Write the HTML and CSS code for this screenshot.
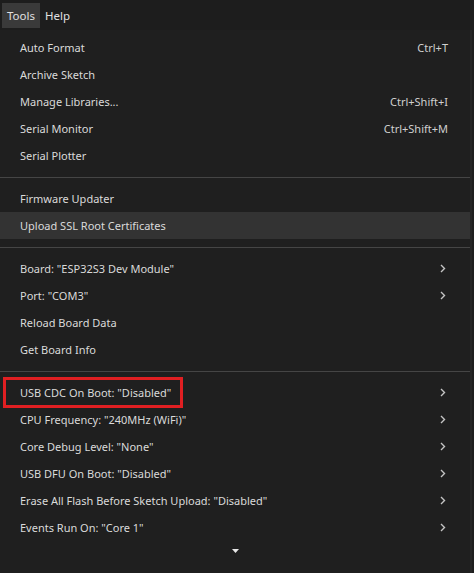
FILE: index.html
```html
<!DOCTYPE html>
<html>
<head>
<meta charset="utf-8">
<link rel="stylesheet" href="styles.css">
</head>
<body>
<div class="bar">
  <span class="bar-item active">Tools</span>
  <span class="bar-item">Help</span>
</div>
<div class="menu">
  <div class="section">
    <div class="row"><span>Auto Format</span><span class="key">Ctrl+T</span></div>
    <div class="row"><span>Archive Sketch</span></div>
    <div class="row"><span>Manage Libraries...</span><span class="key">Ctrl+Shift+I</span></div>
    <div class="row"><span>Serial Monitor</span><span class="key">Ctrl+Shift+M</span></div>
    <div class="row"><span>Serial Plotter</span></div>
  </div>
  <div class="sep"></div>
  <div class="section">
    <div class="row"><span>Firmware Updater</span></div>
    <div class="row hover"><span>Upload SSL Root Certificates</span></div>
  </div>
  <div class="sep"></div>
  <div class="section">
    <div class="row"><span>Board: "ESP32S3 Dev Module"</span><svg class="chev" width="6" height="9" viewBox="0 0 6 9"><polyline points="1,1 4.5,4.5 1,8" /></svg></div>
    <div class="row"><span>Port: "COM3"</span><svg class="chev" width="6" height="9" viewBox="0 0 6 9"><polyline points="1,1 4.5,4.5 1,8" /></svg></div>
    <div class="row"><span>Reload Board Data</span></div>
    <div class="row"><span>Get Board Info</span></div>
  </div>
  <div class="sep"></div>
  <div class="section">
    <div class="row marked"><span>USB CDC On Boot: "Disabled"</span><svg class="chev" width="6" height="9" viewBox="0 0 6 9"><polyline points="1,1 4.5,4.5 1,8" /></svg><div class="redbox"></div></div>
    <div class="row"><span>CPU Frequency: "240MHz (WiFi)"</span><svg class="chev" width="6" height="9" viewBox="0 0 6 9"><polyline points="1,1 4.5,4.5 1,8" /></svg></div>
    <div class="row"><span>Core Debug Level: "None"</span><svg class="chev" width="6" height="9" viewBox="0 0 6 9"><polyline points="1,1 4.5,4.5 1,8" /></svg></div>
    <div class="row"><span>USB DFU On Boot: "Disabled"</span><svg class="chev" width="6" height="9" viewBox="0 0 6 9"><polyline points="1,1 4.5,4.5 1,8" /></svg></div>
    <div class="row"><span>Erase All Flash Before Sketch Upload: "Disabled"</span><svg class="chev" width="6" height="9" viewBox="0 0 6 9"><polyline points="1,1 4.5,4.5 1,8" /></svg></div>
    <div class="row"><span>Events Run On: "Core 1"</span><svg class="chev" width="6" height="9" viewBox="0 0 6 9"><polyline points="1,1 4.5,4.5 1,8" /></svg></div>
  </div>
  <div class="more"><svg width="7" height="4" viewBox="0 0 7 4"><polygon points="0,0 7,0 3.5,4" /></svg></div>
</div>
</body>
</html>
```
FILE: styles.css
```css
html, body {
  margin: 0;
  padding: 0;
  background: #1f1f1f;
  width: 474px;
  height: 573px;
  overflow: hidden;
  font-family: "Noto Sans", "Open Sans", sans-serif;
  font-size: 11px;
  color: #dadada;
}
.bar {
  height: 30px;
  display: flex;
  align-items: center;
  padding-left: 2px;
  background: #1d1d1d;
}
.bar-item {
  height: 25px;
  line-height: 25px;
  padding: 0 5px;
  font-size: 11.5px;
  color: #e0e0e0;
}
.bar-item.active {
  background: #3a3a3a;
}
.menu {
  width: 472px;
  border-right: 2px solid #262626;
  background: #1f1f1f;
  height: 543px;
  padding-top: 4px;
  box-sizing: border-box;
}
.section + .sep + .section {
  padding-top: 7.5px;
}
.sep {
  height: 1px;
  background: #454545;
  margin-top: 7.5px;
}
.row {
  position: relative;
  height: 27px;
  display: flex;
  align-items: center;
  padding: 0 22px 0 20px;
  justify-content: space-between;
}
.row.hover {
  background: #333333;
}
.key {
  color: #d0d0d0;
}
.chev {
  margin-right: 2px;
}
.chev polyline {
  fill: none;
  stroke: #c4c4c4;
  stroke-width: 1.4;
}
.redbox {
  position: absolute;
  left: 3px;
  top: -2px;
  width: 180px;
  height: 31px;
  box-sizing: border-box;
  border: 3px solid #e01f22;
}
.more {
  display: flex;
  justify-content: center;
  padding-top: 8px;
}
.more polygon {
  fill: #e8e8e8;
}
```
